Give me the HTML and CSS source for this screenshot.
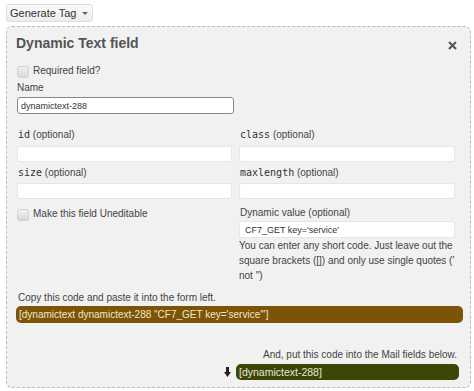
FILE: index.html
```html
<!DOCTYPE html>
<html lang="en">
<head>
  <meta charset="UTF-8" />
  <title>Generate Tag</title>
  <link rel="stylesheet" href="styles.css">
</head>
<body>
  <button class="gen-btn">Generate Tag <span class="caret"></span></button>

  <div class="panel">
    <div class="panel-head">
      <h2>Dynamic Text field</h2>
      <svg class="close" width="9" height="9" viewBox="0 0 9 9">
        <path d="M1 1 L8 8 M8 1 L1 8" stroke="#555" stroke-width="2"/>
      </svg>
    </div>

    <label class="check check-first"><input type="checkbox"> Required field?</label>

    <div class="label name-label">Name</div>
    <input class="name-input" type="text" value="dynamictext-288">

    <div class="row row-1">
      <div>
        <div class="label"><code>id</code> (optional)</div>
        <input class="field" type="text">
      </div>
      <div>
        <div class="label"><code>class</code> (optional)</div>
        <input class="field" type="text">
      </div>
    </div>

    <div class="row row-2">
      <div>
        <div class="label"><code>size</code> (optional)</div>
        <input class="field" type="text">
      </div>
      <div>
        <div class="label"><code>maxlength</code> (optional)</div>
        <input class="field" type="text">
      </div>
    </div>

    <div class="row row-3">
      <div>
        <label class="check"><input type="checkbox"> Make this field Uneditable</label>
      </div>
      <div>
        <div class="label">Dynamic value (optional)</div>
        <input class="field dyn" type="text" value="CF7_GET key='service'">
        <p class="help">You can enter any short code. Just leave out the square brackets ([]) and only use single quotes (' not ")</p>
      </div>
    </div>

    <div class="label copy-label">Copy this code and paste it into the form left.</div>
    <div class="code code-brown">[dynamictext dynamictext-288 "CF7_GET key='service'"]</div>

    <div class="label mail-label">And, put this code into the Mail fields below.</div>
    <div class="mail-row">
      <svg class="down" width="7" height="10" viewBox="0 0 7 10">
        <path d="M2 0 H5 V5 H7 L3.5 10 L0 5 H2 Z" fill="#222"/>
      </svg>
      <div class="code code-green">[dynamictext-288]</div>
    </div>
  </div>
</body>
</html>
```

FILE: styles.css
```css
body {
  margin: 0;
  padding: 4px 4px 0 6px;
  background: #fff;
  font-family: "Liberation Sans", Arial, sans-serif;
  font-size: 10px;
  color: #444;
}
.gen-btn {
  display: block;
  height: 18px;
  padding: 0 4px 0 3px;
  font-family: "Liberation Sans", Arial, sans-serif;
  font-size: 11px;
  color: #333;
  background: linear-gradient(#fafafa, #ececec);
  border: 1px solid #ddd;
  border-radius: 3px;
}
.caret {
  display: inline-block;
  width: 0;
  height: 0;
  margin-left: 2px;
  vertical-align: 2px;
  border-left: 3px solid transparent;
  border-right: 3px solid transparent;
  border-top: 3px solid #666;
}
.panel {
  width: 442px;
  margin-top: 4px;
  padding: 7px 11px 7px 10px;
  background: #f1f1f1;
  border: 1px dashed #bbb;
  border-radius: 6px;
}
.panel-head {
  display: flex;
  justify-content: space-between;
  align-items: center;
}
.panel-head h2 {
  margin: 0 0 0 -1px;
  font-size: 14px;
  line-height: 18px;
  color: #555;
}
.close {
  margin: 5px 2px 0 0;
}
.label {
  line-height: 14px;
  color: #444;
}
code {
  font-family: "DejaVu Sans Mono", monospace;
  font-size: 10px;
  color: #333;
}
.check {
  display: flex;
  align-items: center;
  gap: 4px;
  line-height: 14px;
  color: #444;
}
.check input {
  appearance: none;
  width: 12px;
  height: 12px;
  margin: 1px 0 0 0;
  background: linear-gradient(#f2f2f2, #d8d8d4);
  border: 1px solid #d0d0cc;
  border-radius: 3px;
}
.check-first {
  margin-top: 12px;
}
.name-label {
  margin-top: 3px;
}
.name-input {
  display: block;
  box-sizing: border-box;
  width: 217px;
  height: 17px;
  margin-top: 2px;
  padding: 0 3px;
  font-family: "Liberation Sans", Arial, sans-serif;
  font-size: 9px;
  color: #333;
  background: #fff;
  border: 1px solid #888;
  border-radius: 3px;
}
.row {
  display: grid;
  grid-template-columns: 215px 216px;
  column-gap: 7px;
}
.row .label {
  padding-left: 1px;
}
.field {
  display: block;
  box-sizing: border-box;
  width: 100%;
  height: 16px;
  padding: 0 5px;
  font-family: "Liberation Sans", Arial, sans-serif;
  font-size: 9px;
  color: #333;
  background: #fff;
  border: 1px solid #e6e6e6;
  border-radius: 2px;
}
.row-1 {
  margin-top: 14px;
}
.row-1 .field {
  margin-top: 4px;
}
.row-2 {
  margin-top: 4px;
}
.row-2 .field {
  margin-top: 3px;
}
.row-3 {
  margin-top: 7px;
}
.row-3 .check {
  margin-top: 1px;
}
.dyn {
  height: 17px;
  margin-top: 1px;
}
.help {
  margin: 0;
  line-height: 15px;
  color: #444;
}
.copy-label {
  margin-top: 8px;
  padding-left: 1px;
}
.code {
  box-sizing: border-box;
  height: 17px;
  padding: 0 3px;
  line-height: 17px;
  border-radius: 5px;
  white-space: nowrap;
}
.code-brown {
  width: 447px;
  margin: 1px 0 0 -1px;
  background: #7b5408;
  color: #f3e4c6;
}
.mail-label {
  margin-top: 25px;
  padding-right: 2px;
  text-align: right;
}
.mail-row {
  display: flex;
  justify-content: flex-end;
  align-items: center;
  gap: 5px;
  margin-top: 2px;
}
.code-green {
  width: 223px;
  height: 16px;
  line-height: 16px;
  font-size: 10.5px;
  background: #3c4707;
  color: #e4e6d8;
}
```
